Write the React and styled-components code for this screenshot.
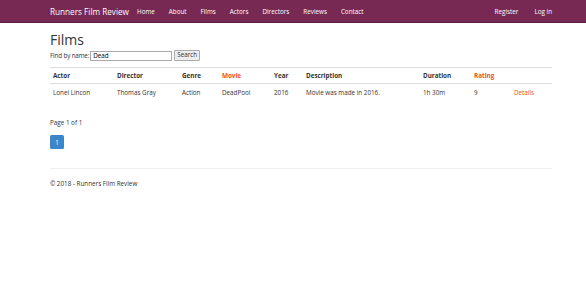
import React from "react";
import styled, { createGlobalStyle } from "styled-components";

const Global = createGlobalStyle`
  html, body { margin: 0; padding: 0; background: #fff; }
  body {
    font-family: "Open Sans", "Noto Sans", sans-serif;
    font-size: 6.3px;
    color: #333;
  }
`;

const Navbar = styled.nav`
  height: 22px;
  background: #772953;
  border-bottom: 1px solid #5e1f42;
`;

const NavInner = styled.div`
  width: 502px;
  margin-left: 50px;
  height: 100%;
  display: flex;
  align-items: center;
`;

const Brand = styled.a`
  color: #fff;
  font-size: 8.2px;
  font-weight: 500;
  width: 87px;
`;

const NavLinks = styled.ul`
  display: flex;
  list-style: none;
  margin: 0;
  padding: 0;
  gap: ${(p) => p.gap || 14}px;
  margin-left: ${(p) => (p.right ? "auto" : 0)};
`;

const NavLink = styled.li`
  color: #fff;
  font-size: 6.3px;
`;

const Container = styled.main`
  width: 502px;
  margin-left: 50px;
`;

const Title = styled.h2`
  font-size: 14px;
  font-weight: 400;
  margin: 9px 0 2px;
  line-height: 16px;
`;

const SearchForm = styled.form`
  display: flex;
  align-items: center;
  gap: 1px;
  margin-bottom: 6px;
  letter-spacing: -0.15px;
`;

const Input = styled.input`
  width: 76px;
  height: 8px;
  padding: 0 2px;
  border: 1px solid #aaa;
  font: inherit;
  font-size: 6.3px;
`;

const Button = styled.button`
  height: 11px;
  padding: 0 2px;
  margin-left: 1px;
  border: 1px solid #aaa;
  border-radius: 1px;
  background: #eee;
  font: inherit;
  font-size: 6.3px;
  color: #333;
  line-height: 1;
`;

const Table = styled.table`
  width: 100%;
  table-layout: fixed;
  border-collapse: collapse;
  border-top: 1px solid #ddd;
  th, td {
    text-align: left;
    padding: 0 3px;
    white-space: nowrap;
  }
  th {
    height: 15px;
    font-weight: 700;
    border-bottom: 1px solid #ddd;
  }
  td {
    height: 17px;
  }
`;

const Sort = styled.span`
  color: #e95420;
`;

const Info = styled.p`
  margin: 17px 0 8px;
`;

const PageBtn = styled.span`
  display: inline-flex;
  align-items: center;
  justify-content: center;
  width: 14px;
  height: 14px;
  background: #3b86c8;
  border-radius: 1.5px;
  color: #fff;
`;

const Rule = styled.hr`
  border: 0;
  border-top: 1px solid #eee;
  margin: 19px 0 10px;
`;

const Footer = styled.footer`
  font-size: 6.3px;
`;

const cols = [64, 65, 40, 52, 32, 117, 51, 40, 41];

export default function App() {
  return (
    <>
      <Global />
      <Navbar>
        <NavInner>
          <Brand>Runners Film Review</Brand>
          <NavLinks gap={14}>
            {["Home", "About", "Films", "Actors", "Directors", "Reviews", "Contact"].map((l) => (
              <NavLink key={l}>{l}</NavLink>
            ))}
          </NavLinks>
          <NavLinks right gap={16}>
            <NavLink>Register</NavLink>
            <NavLink>Log in</NavLink>
          </NavLinks>
        </NavInner>
      </Navbar>
      <Container>
        <Title>Films</Title>
        <SearchForm>
          <span>Find by name:</span>
          <Input defaultValue="Dead" />
          <Button type="button">Search</Button>
        </SearchForm>
        <Table>
          <colgroup>
            {cols.map((w, i) => (
              <col key={i} style={{ width: w + "px" }} />
            ))}
          </colgroup>
          <thead>
            <tr>
              <th>Actor</th>
              <th>Director</th>
              <th>Genre</th>
              <th><Sort>Movie</Sort></th>
              <th>Year</th>
              <th>Description</th>
              <th>Duration</th>
              <th><Sort>Rating</Sort></th>
              <th></th>
            </tr>
          </thead>
          <tbody>
            <tr>
              <td>Lonel Lincon</td>
              <td>Thomas Gray</td>
              <td>Action</td>
              <td>DeadPool</td>
              <td>2016</td>
              <td>Movie was made in 2016.</td>
              <td>1h 30m</td>
              <td>9</td>
              <td><Sort>Details</Sort></td>
            </tr>
          </tbody>
        </Table>
        <Info>Page 1 of 1</Info>
        <PageBtn>1</PageBtn>
        <Rule />
        <Footer>© 2018 - Runners Film Review</Footer>
      </Container>
    </>
  );
}
